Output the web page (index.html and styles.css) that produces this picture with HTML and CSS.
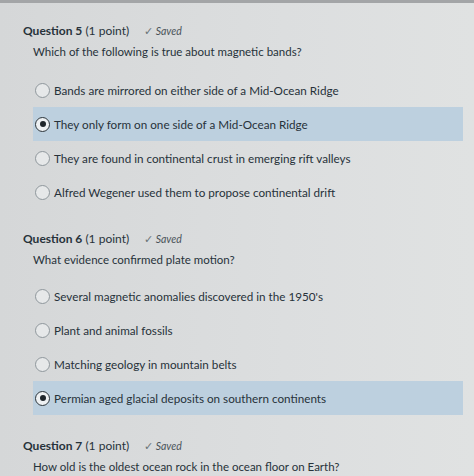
FILE: index.html
```html
<!DOCTYPE html>
<html lang="en">
<head>
    <meta charset="UTF-8">
    <meta name="viewport" content="width=device-width, initial-scale=1.0">
    <title>Quiz</title>
    <link rel="stylesheet" href="styles.css">
</head>
<body>
    <div class="quiz">
        <div class="question q5">
            <div class="q-head">
                <span class="q-title"><b>Question 5</b> (1 point)</span>
                <span class="saved"><span class="tick">&#10003;</span> Saved</span>
            </div>
            <p class="q-text">Which of the following is true about magnetic bands?</p>
            <ul class="options">
                <li class="option"><span class="radio"></span>Bands are mirrored on either side of a Mid-Ocean Ridge</li>
                <li class="option selected"><span class="radio"></span>They only form on one side of a Mid-Ocean Ridge</li>
                <li class="option"><span class="radio"></span>They are found in continental crust in emerging rift valleys</li>
                <li class="option"><span class="radio"></span>Alfred Wegener used them to propose continental drift</li>
            </ul>
        </div>

        <div class="question q6">
            <div class="q-head">
                <span class="q-title"><b>Question 6</b> (1 point)</span>
                <span class="saved"><span class="tick">&#10003;</span> Saved</span>
            </div>
            <p class="q-text">What evidence confirmed plate motion?</p>
            <ul class="options">
                <li class="option"><span class="radio"></span>Several magnetic anomalies discovered in the 1950's</li>
                <li class="option"><span class="radio"></span>Plant and animal fossils</li>
                <li class="option"><span class="radio"></span>Matching geology in mountain belts</li>
                <li class="option selected"><span class="radio"></span>Permian aged glacial deposits on southern continents</li>
            </ul>
        </div>

        <div class="question q7">
            <div class="q-head">
                <span class="q-title"><b>Question 7</b> (1 point)</span>
                <span class="saved"><span class="tick">&#10003;</span> Saved</span>
            </div>
            <p class="q-text">How old is the oldest ocean rock in the ocean floor on Earth?</p>
        </div>
    </div>
</body>
</html>
```

FILE: styles.css
```css
* {
    margin: 0;
    padding: 0;
    box-sizing: border-box;
}

body {
    font-family: Lato, 'Open Sans', sans-serif;
    background: linear-gradient(90deg, #d5d7d8 0%, #dcdedf 60%, #e0e2e2 100%);
    color: #27323a;
    min-height: 100vh;
    border-top: 3px solid #a3a5a7;
    overflow: hidden;
}

.quiz {
    padding: 20px 11px 0 23px;
}

.q-head {
    display: flex;
    align-items: baseline;
    gap: 15px;
    font-size: 12px;
    height: 18px;
}

.q-title b {
    font-weight: 700;
}

.saved {
    font-size: 10.5px;
    font-style: italic;
    color: #4a5359;
}

.tick {
    font-style: normal;
    color: #6a7378;
}

.q-text {
    font-size: 11.5px;
    margin: 4px 0 0 10px;
    height: 17px;
}

.options {
    list-style: none;
    margin-top: 11px;
    margin-left: 10px;
}

.q6 .options {
    margin-top: 9px;
}

.option {
    display: flex;
    align-items: center;
    gap: 4px;
    height: 34px;
    font-size: 11.7px;
    padding-left: 2px;
}

.option.selected {
    background: #bdd0df;
}

.radio {
    width: 15px;
    height: 15px;
    border-radius: 50%;
    border: 1px solid #8f979c;
    background: #e6e8e9;
    flex-shrink: 0;
    display: flex;
    align-items: center;
    justify-content: center;
}

.selected .radio {
    border: 1.5px solid #2b343a;
    background: #eef1f3;
}

.selected .radio::after {
    content: '';
    width: 6px;
    height: 6px;
    border-radius: 50%;
    background: #1f262b;
}

.q6 {
    margin-top: 22px;
}

.q7 {
    margin-top: 23px;
}
```
